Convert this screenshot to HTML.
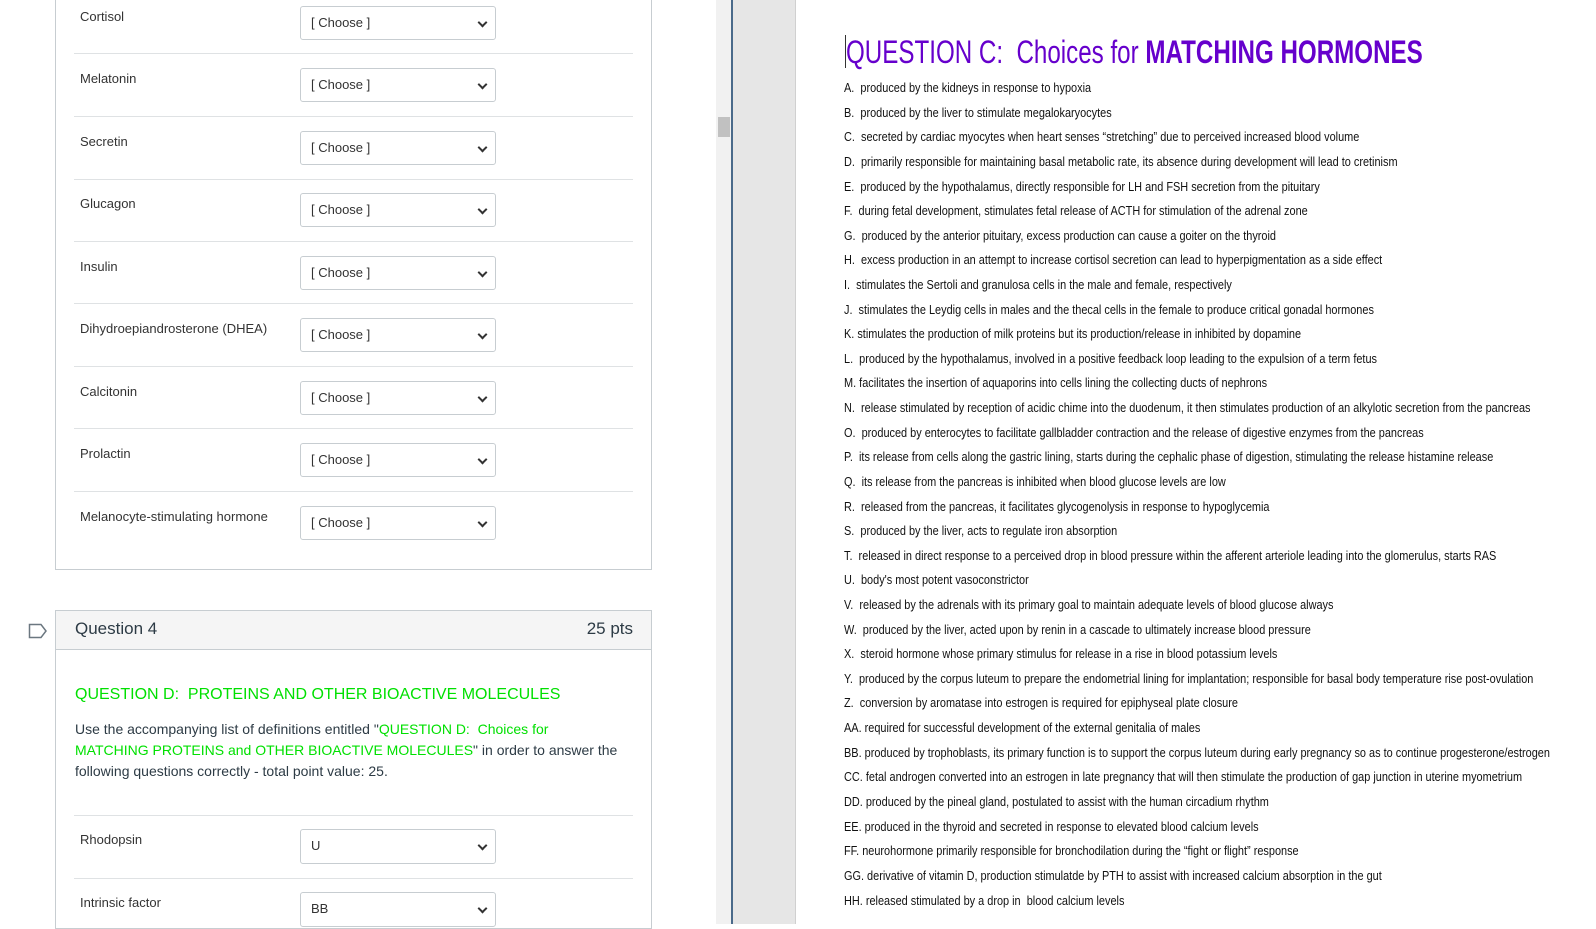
<!DOCTYPE html>
<html><head><meta charset="utf-8"><style>
body{margin:0;width:1596px;height:924px;overflow:hidden;background:#fff;font-family:"Liberation Sans",sans-serif;position:relative}
.a{position:absolute}
.box{left:55px;top:-2px;width:597px;height:572px;border:1px solid #c7cdd1;box-sizing:border-box}
.sep{position:absolute;left:74px;width:559px;height:1px;background:#dfe2e4}
.lab{position:absolute;left:80px;font-size:13px;color:#333}
.sel{position:absolute;left:300px;width:196px;height:34px;border:1px solid #c7cdd1;border-radius:3px;box-sizing:border-box;font-size:13px;color:#333;padding:8px 0 0 10px;background:#fff}
.sel:after{content:"";position:absolute;right:9px;top:12px;width:5px;height:5px;border-right:2px solid #333;border-bottom:2px solid #333;transform:rotate(45deg)}
.r{position:absolute;left:844px;font-size:13px;color:#111;transform:scaleX(.84);transform-origin:0 0;white-space:nowrap}
</style></head><body>
<div class="a box"></div>
<div class="lab" style="top:9px">Cortisol</div><div class="sel" style="top:6px">[ Choose ]</div><div class="sep" style="top:53px"></div>
<div class="lab" style="top:71px">Melatonin</div><div class="sel" style="top:68px">[ Choose ]</div><div class="sep" style="top:116px"></div>
<div class="lab" style="top:134px">Secretin</div><div class="sel" style="top:131px">[ Choose ]</div><div class="sep" style="top:179px"></div>
<div class="lab" style="top:196px">Glucagon</div><div class="sel" style="top:193px">[ Choose ]</div><div class="sep" style="top:241px"></div>
<div class="lab" style="top:259px">Insulin</div><div class="sel" style="top:256px">[ Choose ]</div><div class="sep" style="top:303px"></div>
<div class="lab" style="top:321px">Dihydroepiandrosterone (DHEA)</div><div class="sel" style="top:318px">[ Choose ]</div><div class="sep" style="top:366px"></div>
<div class="lab" style="top:384px">Calcitonin</div><div class="sel" style="top:381px">[ Choose ]</div><div class="sep" style="top:428px"></div>
<div class="lab" style="top:446px">Prolactin</div><div class="sel" style="top:443px">[ Choose ]</div><div class="sep" style="top:491px"></div>
<div class="lab" style="top:509px">Melanocyte-stimulating hormone</div><div class="sel" style="top:506px">[ Choose ]</div>

<svg class="a" style="left:28px;top:623px" width="20" height="16"><path d="M1.5 1.5H13L18 8L13 14.5H1.5Z" fill="none" stroke="#6b7780" stroke-width="1.5"/></svg>
<div class="a" style="left:55px;top:610px;width:597px;height:40px;background:#f5f5f5;border:1px solid #c7cdd1;box-sizing:border-box"></div>
<div class="a" style="left:75px;top:619px;font-size:17px;color:#2d3b45">Question 4</div>
<div class="a" style="left:560px;width:73px;text-align:right;top:619px;font-size:17px;color:#2d3b45">25 pts</div>
<div class="a" style="left:55px;top:649px;width:597px;height:280px;border:1px solid #c7cdd1;border-top:none;box-sizing:border-box"></div>
<div class="a" style="left:75px;top:686px;font-size:16px;color:#00e000">QUESTION D:&nbsp; PROTEINS AND OTHER BIOACTIVE MOLECULES</div>
<div class="a" style="left:75px;top:719px;width:545px;font-size:14px;line-height:21px;color:#2d3b45">Use the accompanying list of definitions entitled "<span style="color:#00e000">QUESTION D:&nbsp; Choices for MATCHING PROTEINS and OTHER BIOACTIVE MOLECULES</span>" in order to answer the following questions correctly - total point value: 25.</div>
<div class="sep" style="top:815px"></div>
<div class="lab" style="top:832px">Rhodopsin</div><div class="sel" style="top:829px;height:35px">U</div><div class="sep" style="top:878px"></div>
<div class="lab" style="top:895px">Intrinsic factor</div><div class="sel" style="top:892px;height:35px">BB</div>

<div class="a" style="left:716px;top:0;width:16px;height:924px;background:#f1f1f1"></div>
<div class="a" style="left:718px;top:117px;width:12px;height:20px;background:#c1c1c1"></div>
<div class="a" style="left:731px;top:0;width:2px;height:924px;background:#4a6a8a"></div>
<div class="a" style="left:733px;top:0;width:62px;height:924px;background:#e6e6e6"></div>
<div class="a" style="left:795px;top:0;width:1px;height:924px;background:#d0d0d0"></div>

<div class="a" style="left:845px;top:35px;width:1px;height:33px;background:#333"></div>
<div class="a" style="left:846px;top:34px;font-size:32px;color:#6600cc;transform:scaleX(.755);transform-origin:0 0;white-space:nowrap">QUESTION C:&nbsp; Choices for <b>MATCHING HORMONES</b></div>
<div class="r" style="top:80px">A.&nbsp; produced by the kidneys in response to hypoxia</div>
<div class="r" style="top:105px">B.&nbsp; produced by the liver to stimulate megalokaryocytes</div>
<div class="r" style="top:129px">C.&nbsp; secreted by cardiac myocytes when heart senses “stretching” due to perceived increased blood volume</div>
<div class="r" style="top:154px">D.&nbsp; primarily responsible for maintaining basal metabolic rate, its absence during development will lead to cretinism</div>
<div class="r" style="top:179px">E.&nbsp; produced by the hypothalamus, directly responsible for LH and FSH secretion from the pituitary</div>
<div class="r" style="top:203px">F.&nbsp; during fetal development, stimulates fetal release of ACTH for stimulation of the adrenal zone</div>
<div class="r" style="top:228px">G.&nbsp; produced by the anterior pituitary, excess production can cause a goiter on the thyroid</div>
<div class="r" style="top:252px">H.&nbsp; excess production in an attempt to increase cortisol secretion can lead to hyperpigmentation as a side effect</div>
<div class="r" style="top:277px">I.&nbsp; stimulates the Sertoli and granulosa cells in the male and female, respectively</div>
<div class="r" style="top:302px">J.&nbsp; stimulates the Leydig cells in males and the thecal cells in the female to produce critical gonadal hormones</div>
<div class="r" style="top:326px">K. stimulates the production of milk proteins but its production/release in inhibited by dopamine</div>
<div class="r" style="top:351px">L.&nbsp; produced by the hypothalamus, involved in a positive feedback loop leading to the expulsion of a term fetus</div>
<div class="r" style="top:375px">M. facilitates the insertion of aquaporins into cells lining the collecting ducts of nephrons</div>
<div class="r" style="top:400px">N.&nbsp; release stimulated by reception of acidic chime into the duodenum, it then stimulates production of an alkylotic secretion from the pancreas</div>
<div class="r" style="top:425px">O.&nbsp; produced by enterocytes to facilitate gallbladder contraction and the release of digestive enzymes from the pancreas</div>
<div class="r" style="top:449px">P.&nbsp; its release from cells along the gastric lining, starts during the cephalic phase of digestion, stimulating the release histamine release</div>
<div class="r" style="top:474px">Q.&nbsp; its release from the pancreas is inhibited when blood glucose levels are low</div>
<div class="r" style="top:499px">R.&nbsp; released from the pancreas, it facilitates glycogenolysis in response to hypoglycemia</div>
<div class="r" style="top:523px">S.&nbsp; produced by the liver, acts to regulate iron absorption</div>
<div class="r" style="top:548px">T.&nbsp; released in direct response to a perceived drop in blood pressure within the afferent arteriole leading into the glomerulus, starts RAS</div>
<div class="r" style="top:572px">U.&nbsp; body's most potent vasoconstrictor</div>
<div class="r" style="top:597px">V.&nbsp; released by the adrenals with its primary goal to maintain adequate levels of blood glucose always</div>
<div class="r" style="top:622px">W.&nbsp; produced by the liver, acted upon by renin in a cascade to ultimately increase blood pressure</div>
<div class="r" style="top:646px">X.&nbsp; steroid hormone whose primary stimulus for release in a rise in blood potassium levels</div>
<div class="r" style="top:671px">Y.&nbsp; produced by the corpus luteum to prepare the endometrial lining for implantation; responsible for basal body temperature rise post-ovulation</div>
<div class="r" style="top:695px">Z.&nbsp; conversion by aromatase into estrogen is required for epiphyseal plate closure</div>
<div class="r" style="top:720px">AA. required for successful development of the external genitalia of males</div>
<div class="r" style="top:745px">BB. produced by trophoblasts, its primary function is to support the corpus luteum during early pregnancy so as to continue progesterone/estrogen</div>
<div class="r" style="top:769px">CC. fetal androgen converted into an estrogen in late pregnancy that will then stimulate the production of gap junction in uterine myometrium</div>
<div class="r" style="top:794px">DD. produced by the pineal gland, postulated to assist with the human circadium rhythm</div>
<div class="r" style="top:819px">EE. produced in the thyroid and secreted in response to elevated blood calcium levels</div>
<div class="r" style="top:843px">FF. neurohormone primarily responsible for bronchodilation during the “fight or flight” response</div>
<div class="r" style="top:868px">GG. derivative of vitamin D, production stimulatde by PTH to assist with increased calcium absorption in the gut</div>
<div class="r" style="top:893px">HH. released stimulated by a drop in&nbsp; blood calcium levels</div>
</body></html>
